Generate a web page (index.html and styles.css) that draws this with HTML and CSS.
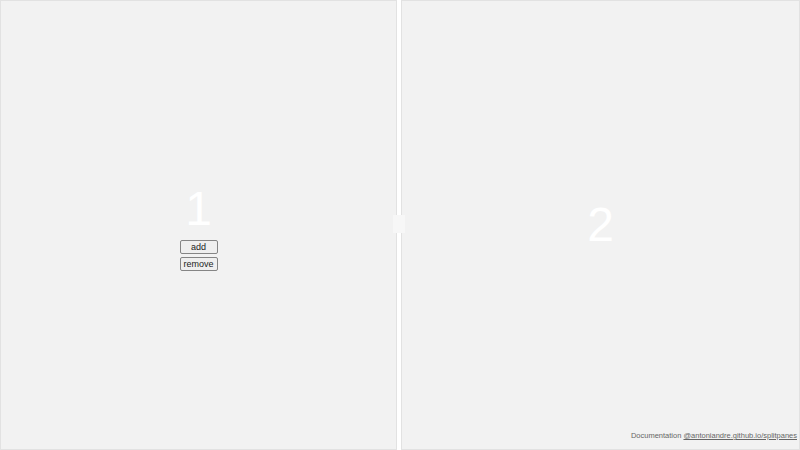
FILE: index.html
```html
<!DOCTYPE html>
<html>
<head>
<meta charset="utf-8">
<link rel="stylesheet" href="styles.css">
</head>
<body>
<div class="splitpanes">
  <div class="pane pane-left">
    <div class="num">1</div>
    <button class="btn">add</button>
    <button class="btn">remove</button>
  </div>
  <div class="splitter"><span class="grip"></span></div>
  <div class="pane pane-right">
    <div class="num">2</div>
  </div>
</div>
<div class="doc">Documentation <a href="#">@antoniandre.github.io/splitpanes</a></div>
</body>
</html>
```
FILE: styles.css
```css
html, body {
  margin: 0;
  padding: 0;
  height: 100%;
  font-family: "Liberation Sans", Arial, sans-serif;
  background: #f2f2f2;
}
.splitpanes {
  display: flex;
  height: 450px;
  width: 800px;
}
.pane {
  box-sizing: border-box;
  background: #f2f2f2;
  border: 1px solid #e2e2e2;
  display: flex;
  flex-direction: column;
  align-items: center;
  justify-content: center;
}
.pane-left {
  flex: 0 0 397px;
}
.pane-right {
  flex: 1 1 auto;
}
.splitter {
  flex: 0 0 4px;
  background: #fff;
  position: relative;
}
.grip {
  position: absolute;
  left: -4px;
  right: -4px;
  top: 215px;
  height: 18px;
  background: #f7f7f7;
}
.num {
  color: #fff;
  font-size: 48px;
  line-height: 50px;
}
.btn {
  font-family: "Liberation Sans", Arial, sans-serif;
  font-size: 9px;
  line-height: 11px;
  width: 38px;
  height: 14px;
  padding: 0;
  margin-top: 3px;
  background: #efefef;
  color: #222;
  border: 1px solid #858585;
  border-radius: 2px;
}
.pane-left .num {
  margin-top: 4px;
  margin-bottom: 3px;
}
.pane-left .btn:last-child {
  margin-bottom: -1px;
}
.doc {
  position: absolute;
  right: 3px;
  bottom: 10px;
  font-size: 7.5px;
  color: #666;
}
.doc a {
  color: #666;
}
```
